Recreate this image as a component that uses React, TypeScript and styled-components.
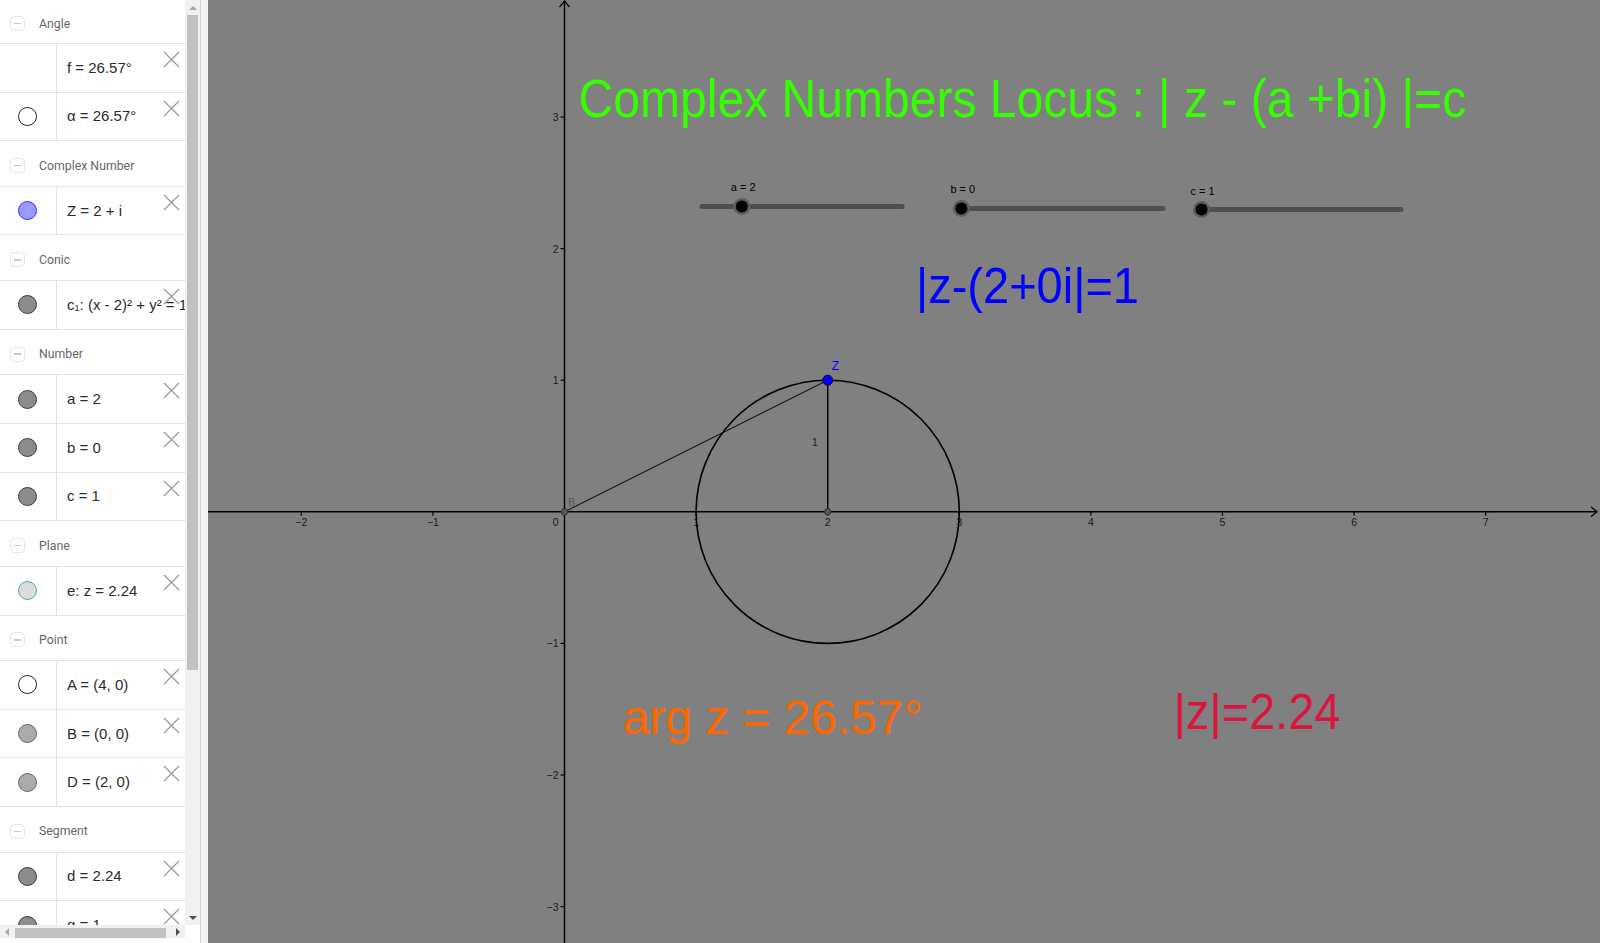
import React from 'react';
import styled, { createGlobalStyle } from 'styled-components';

const GlobalStyle = createGlobalStyle`
  html, body { margin: 0; padding: 0; width: 100%; height: 100%; overflow: hidden; background: #fff; }
  #root { width: 100%; height: 100%; }
  * { box-sizing: border-box; }
`;

const Page = styled.div`
  display: flex;
  width: 1600px;
  height: 943px;
  overflow: hidden;
  font-family: "Liberation Sans", Arial, sans-serif;
`;

const AlgebraPanel = styled.aside`
  width: 201px;
  flex: none;
  display: flex;
  flex-direction: column;
  border-right: 1px solid #d2d2d2;
  background: #fff;
`;

const PanelBody = styled.div`
  display: flex;
  height: 925px;
`;

const List = styled.div`
  width: 185px;
  flex: none;
  overflow: hidden;
`;

const Header = styled.div<{ $first?: boolean }>`
  height: ${(p) => (p.$first ? 44 : 45.7)}px;
  display: flex;
  align-items: center;
  gap: 14px;
  padding: 4px 0 0 10px;
  border-bottom: 1px solid #e2e2e2;
  font-family: Roboto, "Liberation Sans", sans-serif;
  font-size: 12.3px;
  color: #666;
  white-space: nowrap;
`;

const Collapse = styled.span`
  width: 15px;
  height: 15px;
  flex: none;
  border: 1px solid #e6e6e6;
  border-radius: 4px;
  display: flex;
  align-items: center;
  justify-content: center;
  &::after {
    content: '';
    width: 7px;
    height: 1.5px;
    background: #c6c6c6;
  }
`;

const Row = styled.div`
  position: relative;
  height: 48.6px;
  display: grid;
  grid-template-columns: 57px 1fr;
  border-bottom: 1px solid #e2e2e2;
`;

const MarkerCell = styled.div`
  border-right: 1px solid #e2e2e2;
  display: flex;
  align-items: center;
  justify-content: center;
`;

const Marker = styled.span<{ $fill: string; $stroke: string }>`
  width: 19px;
  height: 19px;
  border-radius: 50%;
  background: ${(p) => p.$fill};
  border: 1px solid ${(p) => p.$stroke};
  margin-right: 1px;
`;

const Formula = styled.div`
  display: flex;
  align-items: center;
  padding: 0 0 1px 10px;
  white-space: nowrap;
  font-size: 15px;
  color: #2b2b2b;
`;

const Delete = styled.svg`
  position: absolute;
  top: 7px;
  right: 5px;
  width: 17px;
  height: 17px;
`;

const VScroll = styled.div`
  width: 15px;
  flex: none;
  display: flex;
  flex-direction: column;
  background: #f1f1f1;
`;

const ArrowBox = styled.div`
  height: 15px;
  flex: none;
  display: flex;
  align-items: center;
  justify-content: center;
`;

const Tri = styled.span<{ $dir: 'up' | 'down' | 'left' | 'right'; $color: string }>`
  width: 0;
  height: 0;
  border: 4px solid transparent;
  ${(p) =>
    p.$dir === 'up'
      ? `border-bottom: 4px solid ${p.$color}; border-top-width: 0;`
      : p.$dir === 'down'
      ? `border-top: 4px solid ${p.$color}; border-bottom-width: 0;`
      : p.$dir === 'left'
      ? `border-right: 4px solid ${p.$color}; border-left-width: 0;`
      : `border-left: 4px solid ${p.$color}; border-right-width: 0;`}
`;

const VTrack = styled.div`
  flex: 1;
  padding: 0 2px 0 2px;
`;

const VThumb = styled.div`
  height: 655px;
  background: #c1c1c1;
`;

const PanelFoot = styled.div`
  flex: 1;
  display: flex;
  align-items: flex-start;
`;

const HScroll = styled.div`
  width: 185px;
  height: 13px;
  display: flex;
  align-items: center;
  background: #f1f1f1;
`;

const HArrow = styled.div`
  width: 14px;
  height: 13px;
  flex: none;
  display: flex;
  align-items: center;
  justify-content: center;
`;

const HThumb = styled.div`
  width: 152px;
  height: 10px;
  margin: 2px 5px 0 1px;
  background: #c1c1c1;
`;

const Splitter = styled.div`
  width: 7px;
  flex: none;
  background: #f2f2f2;
`;

const Canvas = styled.main`
  flex: 1;
  background: #808080;
  overflow: hidden;
`;

const Graph = styled.svg`
  display: block;
  width: 1392px;
  height: 943px;
`;

type Item =
  | { kind: 'header'; label: string }
  | { kind: 'row'; text: string; marker?: { fill: string; stroke: string } };

const DARK = { fill: '#8c8c8c', stroke: '#3a3a3a' };
const LIGHT = { fill: '#ababab', stroke: '#666' };
const WHITE = { fill: '#fff', stroke: '#222' };

const items: Item[] = [
  { kind: 'header', label: 'Angle' },
  { kind: 'row', text: 'f = 26.57°' },
  { kind: 'row', text: 'α = 26.57°', marker: WHITE },
  { kind: 'header', label: 'Complex Number' },
  { kind: 'row', text: 'Z = 2 + i', marker: { fill: '#9999ff', stroke: '#3030ff' } },
  { kind: 'header', label: 'Conic' },
  { kind: 'row', text: 'c₁: (x - 2)² + y² = 1', marker: DARK },
  { kind: 'header', label: 'Number' },
  { kind: 'row', text: 'a = 2', marker: DARK },
  { kind: 'row', text: 'b = 0', marker: DARK },
  { kind: 'row', text: 'c = 1', marker: DARK },
  { kind: 'header', label: 'Plane' },
  { kind: 'row', text: 'e: z = 2.24', marker: { fill: '#dcdcdc', stroke: '#4aa6b2' } },
  { kind: 'header', label: 'Point' },
  { kind: 'row', text: 'A = (4, 0)', marker: WHITE },
  { kind: 'row', text: 'B = (0, 0)', marker: LIGHT },
  { kind: 'row', text: 'D = (2, 0)', marker: LIGHT },
  { kind: 'header', label: 'Segment' },
  { kind: 'row', text: 'd = 2.24', marker: DARK },
  { kind: 'row', text: 'g = 1', marker: DARK },
];

const DeleteIcon = () => (
  <Delete viewBox="0 0 17 17">
    <path d="M1 1 L16 16 M16 1 L1 16" stroke="#9a9a9a" strokeWidth="1.3" fill="none" />
  </Delete>
);

const O = { x: 356.5, y: 511.8 };
const U = 131.6;
const px = (v: number) => O.x + v * U;
const py = (v: number) => O.y - v * U;
const lab = (k: number) => (k < 0 ? `\u2212${-k}` : `${k}`);

const Slider = ({ x1, x2, y, t, label }: { x1: number; x2: number; y: number; t: number; label: string }) => (
  <g>
    <text x={t - 11} y={y - 15} fontSize="11" fill="#000" fontFamily="Liberation Sans, Arial, sans-serif">
      {label}
    </text>
    <line x1={x1} y1={y} x2={x2} y2={y} stroke="#4f4f4f" strokeWidth="5" strokeLinecap="round" />
    <circle cx={t} cy={y} r="8.5" fill="#5e5e5e" />
    <circle cx={t} cy={y} r="6" fill="#000" />
  </g>
);

const GraphView = () => {
  const xt = [-2, -1, 1, 2, 3, 4, 5, 6, 7];
  const yt = [-3, -2, -1, 1, 2, 3];
  const font = 'Liberation Sans, Arial, sans-serif';
  return (
    <Graph viewBox="0 0 1392 943">
      {/* axes */}
      <line x1="0" y1={O.y} x2="1389" y2={O.y} stroke="#000" strokeWidth="1.5" />
      <polyline points={`1383,${O.y - 5} 1389,${O.y} 1383,${O.y + 5}`} fill="none" stroke="#000" strokeWidth="1.2" />
      <line x1={O.x} y1="1" x2={O.x} y2="943" stroke="#000" strokeWidth="1.5" />
      <polyline points={`${O.x - 5},7 ${O.x},1 ${O.x + 5},7`} fill="none" stroke="#000" strokeWidth="1.2" />
      {xt.map((k) => (
        <g key={`x${k}`}>
          <line x1={px(k)} y1={O.y} x2={px(k)} y2={O.y + 4} stroke="#000" strokeWidth="1.2" />
          <text x={px(k)} y={O.y + 14} fontSize="10.5" textAnchor="middle" fill="#1a1a1a" fontFamily={font}>
            {lab(k)}
          </text>
        </g>
      ))}
      {yt.map((k) => (
        <g key={`y${k}`}>
          <line x1={O.x - 4} y1={py(k)} x2={O.x} y2={py(k)} stroke="#000" strokeWidth="1.2" />
          <text x={O.x - 6} y={py(k) + 4} fontSize="10.5" textAnchor="end" fill="#1a1a1a" fontFamily={font}>
            {lab(k)}
          </text>
        </g>
      ))}
      <text x={O.x - 6} y={O.y + 14} fontSize="10.5" textAnchor="end" fill="#1a1a1a" fontFamily={font}>
        0
      </text>

      {/* sliders */}
      <Slider x1={494} x2={694} y={206.4} t={533.8} label="a = 2" />
      <Slider x1={753} x2={955} y={208.4} t={753.4} label="b = 0" />
      <Slider x1={994} x2={1193} y={209.5} t={993.5} label="c = 1" />

      {/* geometry */}
      <circle cx={px(2)} cy={O.y} r={U} fill="none" stroke="#000" strokeWidth="1.6" />
      <line x1={O.x} y1={O.y} x2={px(2)} y2={py(1)} stroke="#000" strokeWidth="1" />
      <line x1={px(2)} y1={O.y} x2={px(2)} y2={py(1)} stroke="#000" strokeWidth="1.5" />
      <circle cx={O.x} cy={O.y} r="3.2" fill="#555" stroke="#2a2a2a" strokeWidth="0.8" />
      <circle cx={px(2)} cy={O.y} r="3.2" fill="#555" stroke="#2a2a2a" strokeWidth="0.8" />
      <circle cx={px(2)} cy={py(1)} r="5" fill="#0000ff" stroke="#000040" strokeWidth="1" />
      <text x={360} y={505.5} fontSize="11" fill="#5a5a5a" fontFamily={font}>B</text>
      <text x={623.7} y={370} fontSize="12" fill="#0000ff" fontFamily={font}>Z</text>
      <text x={603.7} y={446} fontSize="11" fill="#222" fontFamily={font}>1</text>

      {/* texts */}
      <text x={370.5} y={116.5} fontSize="54" fill="#33ff00" fontFamily={font} textLength={887.7} lengthAdjust="spacingAndGlyphs">
        Complex Numbers Locus : | z - (a +bi) |=c
      </text>
      <text x={708} y={303.4} fontSize="50" fill="#0000ff" fontFamily={font} textLength={223} lengthAdjust="spacingAndGlyphs">
        |z-(2+0i|=1
      </text>
      <text x={415} y={733.6} fontSize="48" fill="#ff6600" fontFamily={font} textLength={299.6} lengthAdjust="spacingAndGlyphs">
        arg z = 26.57°
      </text>
      <text x={965.5} y={728.5} fontSize="50" fill="#dc143c" fontFamily={font} textLength={167} lengthAdjust="spacingAndGlyphs">
        |z|=2.24
      </text>
    </Graph>
  );
};

export default function App() {
  let firstHeader = true;
  return (
    <Page>
      <GlobalStyle />
      <AlgebraPanel>
        <PanelBody>
          <List>
            {items.map((it, i) => {
              if (it.kind === 'header') {
                const first = firstHeader;
                firstHeader = false;
                return (
                  <Header key={i} $first={first}>
                    <Collapse />
                    {it.label}
                  </Header>
                );
              }
              return (
                <Row key={i}>
                  <MarkerCell>{it.marker && <Marker $fill={it.marker.fill} $stroke={it.marker.stroke} />}</MarkerCell>
                  <Formula>{it.text}</Formula>
                  <DeleteIcon />
                </Row>
              );
            })}
          </List>
          <VScroll>
            <ArrowBox>
              <Tri $dir="up" $color="#a8a8a8" />
            </ArrowBox>
            <VTrack>
              <VThumb />
            </VTrack>
            <ArrowBox>
              <Tri $dir="down" $color="#505050" />
            </ArrowBox>
          </VScroll>
        </PanelBody>
        <PanelFoot>
          <HScroll>
            <HArrow>
              <Tri $dir="left" $color="#a8a8a8" />
            </HArrow>
            <HThumb />
            <HArrow>
              <Tri $dir="right" $color="#505050" />
            </HArrow>
          </HScroll>
        </PanelFoot>
      </AlgebraPanel>
      <Splitter />
      <Canvas>
        <GraphView />
      </Canvas>
    </Page>
  );
}
